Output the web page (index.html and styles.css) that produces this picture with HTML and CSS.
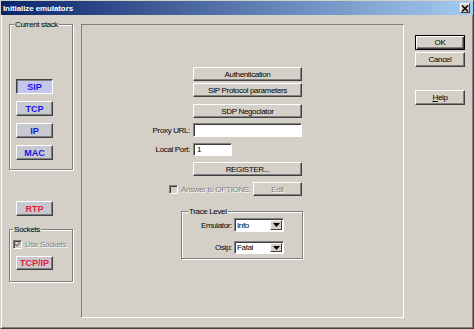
FILE: index.html
```html
<!DOCTYPE html>
<html>
<head>
<meta charset="utf-8">
<title>Initialize emulators</title>
<link rel="stylesheet" href="styles.css">
</head>
<body>
<div class="window">
  <div class="titlebar">
    <span class="title">Initialize emulators</span>
    <span class="close"><svg width="8" height="7" viewBox="0 0 8 7"><path d="M1 0.5 L7 6.5 M7 0.5 L1 6.5" stroke="#000" stroke-width="1.5" fill="none"/></svg></span>
  </div>
  <div class="content">
    <div class="leftcol">
      <fieldset class="group stack">
        <legend>Current stack</legend>
        <button class="layer blue pressed">SIP</button>
        <button class="layer blue">TCP</button>
        <button class="layer blue">IP</button>
        <button class="layer blue">MAC</button>
      </fieldset>
      <button class="layer red rtp">RTP</button>
      <fieldset class="group sockets">
        <legend>Sockets</legend>
        <div class="check disabled">
          <span class="box"><svg width="7" height="7" viewBox="0 0 7 7"><path d="M1 3 L3 5 L6 1.5" stroke="#808080" stroke-width="1.4" fill="none"/></svg></span>
          <span>Use Sockets</span>
        </div>
        <button class="layer red tcpip">TCP/IP</button>
      </fieldset>
    </div>
    <div class="panel">
      <div class="form">
        <button class="btn wide">Authentication</button>
        <button class="btn wide gap2">SIP Protocol parameters</button>
        <button class="btn wide gap7">SDP Negociator</button>
        <div class="row gap5">
          <label class="lbl">Proxy URL:</label>
          <div class="field url"></div>
        </div>
        <div class="row gap6">
          <label class="lbl">Local Port:</label>
          <div class="field port">1</div>
        </div>
        <button class="btn wide gap6">REGISTER...</button>
        <div class="answer gap6">
          <span class="box"></span>
          <span class="distext">Answer to OPTIONS:</span>
          <button class="btn edit">Edit</button>
        </div>
        <fieldset class="group trace">
          <legend>Trace Level</legend>
          <div class="trow">
            <label class="lbl">Emulator:</label>
            <div class="select"><span>Info</span><span class="drop"><svg width="7" height="4" viewBox="0 0 7 4"><polygon points="0,0 7,0 3.5,4" fill="#000"/></svg></span></div>
          </div>
          <div class="trow second">
            <label class="lbl">Osip:</label>
            <div class="select small"><span>Fatal</span><span class="drop"><svg width="7" height="4" viewBox="0 0 7 4"><polygon points="0,0 7,0 3.5,4" fill="#000"/></svg></span></div>
          </div>
        </fieldset>
      </div>
    </div>
    <div class="rightcol">
      <button class="btn side default">OK</button>
      <button class="btn side gap2">Cancel</button>
      <button class="btn side help"><u>H</u>elp</button>
    </div>
  </div>
</div>
</body>
</html>
```

FILE: styles.css
```css
* { box-sizing: border-box; }
html, body { margin: 0; padding: 0; }
body {
  background: #d4d0c8;
  font-family: "Liberation Sans", Arial, sans-serif;
  font-size: 8px;
  letter-spacing: -0.35px;
  color: #000;
}
.window {
  width: 474px;
  height: 329px;
  border: 1px solid;
  border-color: #d4d0c8 #404040 #404040 #d4d0c8;
  box-shadow: inset 1px 1px #fff, inset -1px -1px #808080;
  display: flex;
  flex-direction: column;
}
.titlebar {
  height: 14px;
  background: linear-gradient(to right, #0a246a, #a6caf0);
  display: flex;
  align-items: center;
  justify-content: space-between;
  padding: 0 3px 0 2px;
}
.title {
  color: #fff;
  font-weight: bold;
  font-size: 8px;
  letter-spacing: -0.1px;
}
.close {
  width: 10px;
  height: 10px;
  background: #d4d0c8;
  border: 1px solid;
  border-color: #fff #404040 #404040 #fff;
  display: flex;
  align-items: center;
  justify-content: center;
}
.close svg { display: block; }
.content {
  display: flex;
  flex: 1;
  padding-left: 8px;
}
.leftcol {
  width: 64px;
  margin-top: 5px;
  display: flex;
  flex-direction: column;
  align-items: flex-start;
}
.group {
  margin: 0;
  border: 1px solid #808080;
  box-shadow: inset 1px 1px #fff, 1px 1px #fff;
  min-width: 0;
}
.group legend {
  padding: 0 1px;
  line-height: 9px;
  height: 9px;
  background: #d4d0c8;
}
.stack {
  width: 64px;
  padding: 50px 0 9px 6px;
  display: flex;
  flex-direction: column;
  align-items: flex-start;
}
.stack legend { margin-left: -2px; }
button {
  font-family: inherit;
  font-size: inherit;
  letter-spacing: inherit;
  margin: 0;
  padding: 0;
  color: #000;
}
.layer {
  width: 37px;
  height: 15px;
  background: #c8c8d0;
  border: 1px solid;
  border-color: #fff #404040 #404040 #fff;
  box-shadow: inset -1px -1px #808080;
  font-weight: bold;
  font-size: 9px;
  letter-spacing: 0;
  line-height: 12px;
}
.layer + .layer { margin-top: 7px; }
.blue { color: #1414e6; }
.red { color: #e6203c; }
.pressed {
  border-color: #404040 #fff #fff #404040;
  box-shadow: inset 1px 1px #808080;
  background: #c4c6ee;
}
.rtp { margin: 31px 0 0 7px; }
.sockets {
  width: 64px;
  margin-top: 9px;
  padding: 6px 0 11px 3px;
  display: flex;
  flex-direction: column;
  align-items: flex-start;
}
.check {
  display: flex;
  align-items: center;
  gap: 3px;
  height: 9px;
  white-space: nowrap;
  color: #808080;
  text-shadow: 1px 1px #fff;
}
.box {
  width: 9px;
  height: 9px;
  flex: none;
  background: #d4d0c8;
  border: 1px solid;
  border-color: #808080 #fff #fff #808080;
  box-shadow: inset 1px 1px #404040;
  display: flex;
  align-items: center;
  justify-content: center;
}
.box svg { display: block; }
.tcpip { margin: 7px 0 0 3px; height: 14px; }
.panel {
  width: 323px;
  height: 294px;
  margin: 9px 0 0 8px;
  border: 1px solid;
  border-color: #808080 #fff #fff #808080;
}
.form {
  padding: 42px 0 0 48px;
  display: flex;
  flex-direction: column;
  align-items: flex-start;
}
.btn {
  height: 14px;
  background: #d4d0c8;
  border: 1px solid;
  border-color: #fff #404040 #404040 #fff;
  box-shadow: inset -1px -1px #808080;
  text-align: center;
  line-height: 11px;
  white-space: nowrap;
}
.wide { width: 109px; margin-left: 63px; }
.gap2 { margin-top: 2px; }
.gap5 { margin-top: 5px; }
.gap6 { margin-top: 6px; }
.gap7 { margin-top: 7px; }
.row {
  display: grid;
  grid-template-columns: 60px 109px;
  column-gap: 3px;
  align-items: center;
}
.lbl { text-align: right; white-space: nowrap; }
.field {
  background: #fff;
  border: 1px solid;
  border-color: #808080 #fff #fff #808080;
  box-shadow: inset 1px 1px #404040;
  padding-left: 3px;
  line-height: 11px;
}
.url { height: 14px; }
.port { width: 39px; height: 13px; }
.answer {
  display: flex;
  align-items: center;
  width: 133px;
  margin-left: 39px;
}
.distext {
  margin-left: 3px;
  white-space: nowrap;
  color: #808080;
  text-shadow: 1px 1px #fff;
}
.edit {
  width: 49px;
  margin-left: auto;
  color: #808080;
  text-shadow: 1px 1px #fff;
}
.trace {
  width: 122px;
  margin-top: 11px;
  margin-left: 51px;
  padding: 2px 18px 4px 6px;
}
.trow {
  display: grid;
  grid-template-columns: 1fr 50px;
  column-gap: 2px;
  align-items: center;
}
.trow.second { margin-top: 9px; }
.select {
  height: 14px;
  background: #fff;
  border: 1px solid;
  border-color: #808080 #fff #fff #808080;
  box-shadow: inset 1px 1px #404040;
  display: flex;
  align-items: center;
  padding-left: 2px;
}
.select.small { height: 13px; }
.drop {
  margin-left: auto;
  margin-right: 1px;
  width: 12px;
  height: 10px;
  background: #d4d0c8;
  border: 1px solid;
  border-color: #fff #404040 #404040 #fff;
  display: flex;
  align-items: center;
  justify-content: center;
}
.select.small .drop { height: 9px; }
.drop svg { display: block; }
.rightcol {
  width: 50px;
  margin: 20px 0 0 11px;
  display: flex;
  flex-direction: column;
}
.side { width: 50px; height: 15px; }
.default {
  border-color: #000;
  box-shadow: inset 1px 1px #fff, inset -1px -1px #404040, inset -2px -2px #808080;
}
.help { margin-top: 23px; }
```
